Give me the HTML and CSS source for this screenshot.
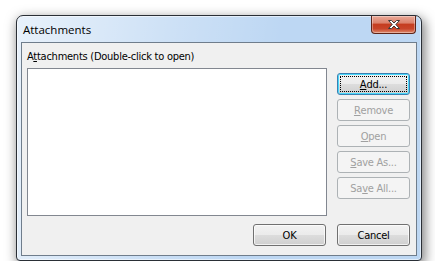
FILE: index.html
```html
<!DOCTYPE html>
<html>
<head>
<meta charset="utf-8">
<link rel="stylesheet" href="styles.css">
</head>
<body>
<div class="desk">
  <div class="window">
    <div class="titlebar">
      <span class="title">Attachments</span>
      <span class="close">
        <svg width="16" height="11" viewBox="0 0 16 11">
          <path d="M2.5 1.5 L5.5 1.5 L8 4 L10.5 1.5 L13.5 1.5 L9.8 5.5 L13.5 9.5 L10.5 9.5 L8 7 L5.5 9.5 L2.5 9.5 L6.2 5.5 Z" fill="#ffffff" stroke="#3b3b3b" stroke-width="1" stroke-linejoin="round"/>
        </svg>
      </span>
    </div>
    <div class="client">
      <div class="label">A<u>t</u>tachments (Double-click to open)</div>
      <div class="main">
        <div class="listbox"></div>
        <div class="side">
          <div class="btn focus"><span class="focusrect"><u>A</u>dd...</span></div>
          <div class="btn disabled"><u>R</u>emove</div>
          <div class="btn disabled"><u>O</u>pen</div>
          <div class="btn disabled"><u>S</u>ave As...</div>
          <div class="btn disabled">Sa<u>v</u>e All...</div>
        </div>
      </div>
      <div class="footer">
        <div class="btn">OK</div>
        <div class="btn">Cancel</div>
      </div>
    </div>
  </div>
</div>
</body>
</html>
```

FILE: styles.css
```css
html, body {
  margin: 0;
  padding: 0;
  background: #ffffff;
}
.desk {
  padding: 15px 0 0 16px;
}
.window {
  width: 406px;
  height: 246px;
  box-sizing: border-box;
  border: 1px solid #2a2f36;
  border-radius: 7px 7px 4px 4px;
  padding: 0 4px 4px 4px;
  background:
    linear-gradient(100deg, rgba(255,255,255,0.65) 0%, rgba(255,255,255,0.25) 35%, rgba(255,255,255,0) 60%),
    #bdd7f3;
  box-shadow: inset 0 0 0 1px rgba(255,255,255,0.55), 2px 4px 12px 1px rgba(0,0,0,0.5);
  display: flex;
  flex-direction: column;
}
.titlebar {
  height: 26px;
  display: flex;
  justify-content: space-between;
  align-items: flex-start;
}
.title {
  font-family: "Open Sans", "Noto Sans", sans-serif;
  font-size: 11.5px;
  color: #000000;
  padding: 6px 0 0 2px;
  line-height: 16px;
}
.close {
  width: 45px;
  height: 18px;
  margin-right: 1px;
  box-sizing: border-box;
  border: 1px solid #5e2418;
  border-top: none;
  border-radius: 0 0 4px 4px;
  background: linear-gradient(#e9a999 0%, #dc836d 40%, #c53d20 50%, #c8452a 75%, #dd8a6d 100%);
  box-shadow: inset 0 0 0 1px rgba(255,255,255,0.35);
  display: flex;
  align-items: center;
  justify-content: center;
}
.close svg { display: block; }
.client {
  flex: 1;
  border: 1px solid #6f7d8c;
  background: #f0f0f0;
  padding: 0 6px 0 5px;
  display: flex;
  flex-direction: column;
  font-family: "DejaVu Sans Condensed", "Liberation Sans", sans-serif;
  font-size: 11px;
  letter-spacing: -0.25px;
  color: #000000;
}
.label {
  padding-top: 7px;
  height: 18px;
  line-height: 14px;
}
.main {
  display: flex;
  gap: 10px;
}
.listbox {
  width: 300px;
  height: 148px;
  box-sizing: border-box;
  border: 1px solid #828790;
  background: #ffffff;
}
.side {
  display: flex;
  flex-direction: column;
  gap: 4px;
  padding-top: 5px;
}
.btn {
  width: 73px;
  height: 22px;
  box-sizing: border-box;
  border: 1px solid #707070;
  border-radius: 3px;
  background: linear-gradient(#f2f2f2 0%, #ebebeb 50%, #dddddd 50%, #cfcfcf 100%);
  box-shadow: inset 0 0 0 1px rgba(255,255,255,0.7);
  display: flex;
  align-items: center;
  justify-content: center;
  line-height: 13px;
}
.btn.disabled {
  border-color: #adb2b5;
  background: #f4f4f4;
  color: #a0a0a0;
  box-shadow: none;
}
.btn.focus {
  border-color: #3c7fb1;
  box-shadow: inset 0 0 0 1px #48d8fb;
  padding: 2px;
}
.focusrect {
  flex: 1;
  align-self: stretch;
  border: 1px dotted #000000;
  display: flex;
  align-items: center;
  justify-content: center;
}
.footer {
  display: flex;
  justify-content: flex-end;
  gap: 11px;
  padding-top: 8px;
}
```
